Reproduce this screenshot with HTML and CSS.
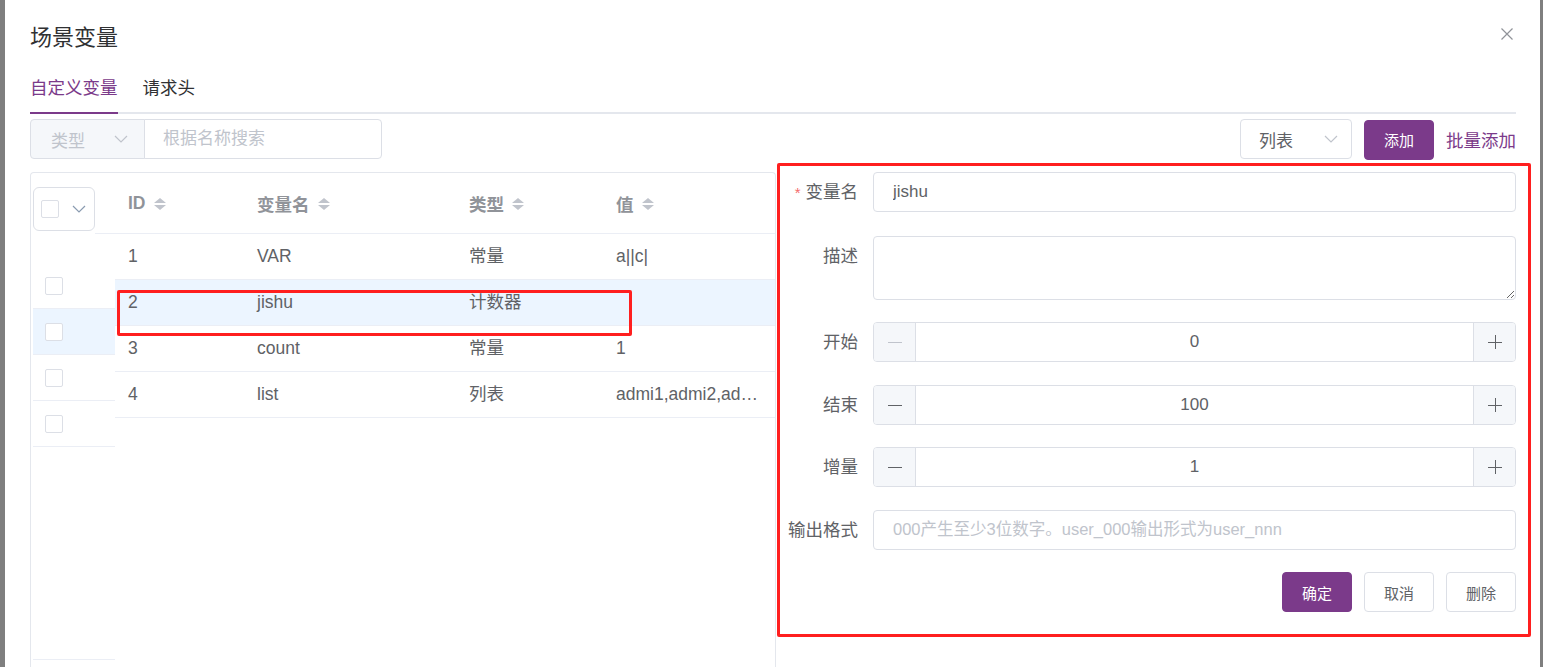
FILE: index.html
```html
<!DOCTYPE html>
<html lang="zh-CN">
<head>
    <meta charset="UTF-8">
    <meta name="viewport" content="width=device-width, initial-scale=1.0">
    <title>场景变量</title>
    <link rel="stylesheet" href="styles.css">
</head>
<body>
    <div class="dialog">
        <div class="dialog-header">
            <span class="dialog-title">场景变量</span>
            <button class="dialog-close" type="button">
                <svg width="12" height="12" viewBox="0 0 12 12"><path d="M0.5 0.5 L11.5 11.5 M11.5 0.5 L0.5 11.5" stroke="#909399" stroke-width="1.2" fill="none"/></svg>
            </button>
        </div>

        <div class="tabs">
            <div class="tab active">自定义变量</div>
            <div class="tab">请求头</div>
        </div>

        <div class="toolbar">
            <div class="search-group">
                <div class="select type-select">
                    <span>类型</span>
                    <svg class="chevron" width="14" height="8" viewBox="0 0 14 8"><polyline points="1,1 7,7 13,1" stroke="#c0c4cc" stroke-width="1.2" fill="none"/></svg>
                </div>
                <input class="search-input" type="text" placeholder="根据名称搜索">
            </div>
            <div class="toolbar-right">
                <div class="select view-select">
                    <span>列表</span>
                    <svg class="chevron" width="14" height="8" viewBox="0 0 14 8"><polyline points="1,1 7,7 13,1" stroke="#c0c4cc" stroke-width="1.2" fill="none"/></svg>
                </div>
                <button class="btn btn-primary" type="button">添加</button>
                <a class="link" href="#">批量添加</a>
            </div>
        </div>

        <div class="content">
            <div class="table-wrap">
                <div class="fixed-col">
                    <div class="fixed-head">
                        <div class="check-menu">
                            <span class="checkbox"></span>
                            <svg width="14" height="8" viewBox="0 0 14 8"><polyline points="1,1 7,7 13,1" stroke="#8a9bb0" stroke-width="1.2" fill="none"/></svg>
                        </div>
                    </div>
                    <div class="fixed-row"><span class="checkbox"></span></div>
                    <div class="fixed-row current"><span class="checkbox"></span></div>
                    <div class="fixed-row"><span class="checkbox"></span></div>
                    <div class="fixed-row"><span class="checkbox"></span></div>
                </div>

                <div class="main-table">
                    <div class="row head">
                        <div class="cell">ID <span class="caret"><i class="up"></i><i class="down"></i></span></div>
                        <div class="cell">变量名 <span class="caret"><i class="up"></i><i class="down"></i></span></div>
                        <div class="cell">类型 <span class="caret"><i class="up"></i><i class="down"></i></span></div>
                        <div class="cell">值 <span class="caret"><i class="up"></i><i class="down"></i></span></div>
                    </div>
                    <div class="row">
                        <div class="cell">1</div>
                        <div class="cell">VAR</div>
                        <div class="cell">常量</div>
                        <div class="cell">a||c|</div>
                    </div>
                    <div class="row current">
                        <div class="cell">2</div>
                        <div class="cell">jishu</div>
                        <div class="cell">计数器</div>
                        <div class="cell"></div>
                    </div>
                    <div class="row">
                        <div class="cell">3</div>
                        <div class="cell">count</div>
                        <div class="cell">常量</div>
                        <div class="cell">1</div>
                    </div>
                    <div class="row">
                        <div class="cell">4</div>
                        <div class="cell">list</div>
                        <div class="cell">列表</div>
                        <div class="cell" title="admi1,admi2,admi3">admi1,admi2,ad…</div>
                    </div>
                </div>
            </div>

            <form class="var-form">
                <div class="form-item">
                    <label class="form-label required">变量名</label>
                    <input class="input" type="text" value="jishu">
                </div>
                <div class="form-item">
                    <label class="form-label">描述</label>
                    <textarea class="textarea"></textarea>
                </div>
                <div class="form-item">
                    <label class="form-label">开始</label>
                    <div class="number-input">
                        <span class="num-btn minus disabled"><svg width="14" height="14" viewBox="0 0 14 14"><path d="M0 7.5 H14" stroke="currentColor" stroke-width="1"/></svg></span>
                        <input type="text" value="0">
                        <span class="num-btn plus"><svg width="14" height="14" viewBox="0 0 14 14"><path d="M0 7.5 H14 M7.5 0 V14" stroke="currentColor" stroke-width="1"/></svg></span>
                    </div>
                </div>
                <div class="form-item">
                    <label class="form-label">结束</label>
                    <div class="number-input">
                        <span class="num-btn minus"><svg width="14" height="14" viewBox="0 0 14 14"><path d="M0 7.5 H14" stroke="currentColor" stroke-width="1"/></svg></span>
                        <input type="text" value="100">
                        <span class="num-btn plus"><svg width="14" height="14" viewBox="0 0 14 14"><path d="M0 7.5 H14 M7.5 0 V14" stroke="currentColor" stroke-width="1"/></svg></span>
                    </div>
                </div>
                <div class="form-item">
                    <label class="form-label">增量</label>
                    <div class="number-input">
                        <span class="num-btn minus"><svg width="14" height="14" viewBox="0 0 14 14"><path d="M0 7.5 H14" stroke="currentColor" stroke-width="1"/></svg></span>
                        <input type="text" value="1">
                        <span class="num-btn plus"><svg width="14" height="14" viewBox="0 0 14 14"><path d="M0 7.5 H14 M7.5 0 V14" stroke="currentColor" stroke-width="1"/></svg></span>
                    </div>
                </div>
                <div class="form-item">
                    <label class="form-label">输出格式</label>
                    <input class="input format-input" type="text" placeholder="000产生至少3位数字。user_000输出形式为user_nnn">
                </div>
                <div class="form-actions">
                    <button class="btn btn-primary" type="button">确定</button>
                    <button class="btn" type="button">取消</button>
                    <button class="btn" type="button">删除</button>
                </div>
            </form>
        </div>
    </div>

    <!-- annotation boxes drawn over the screenshot -->
    <div class="mark mark-row"></div>
    <div class="mark mark-form"></div>
</body>
</html>
```

FILE: styles.css
```css
:root {
    --primary: #7b3a8a;
    --text: #606266;
    --title: #303133;
    --muted: #909399;
    --placeholder: #c0c4cc;
    --border: #dcdfe6;
    --line: #ebeef5;
    --fill: #f5f7fa;
    --current: #ecf5ff;
}

* {
    margin: 0;
    padding: 0;
    box-sizing: border-box;
    font-family: "Liberation Sans", "Noto Sans CJK SC", sans-serif;
}

body {
    position: relative;
    width: 1543px;
    height: 667px;
    overflow: hidden;
    background-color: #7f7f7f;
}

.dialog {
    margin-left: 5px;
    width: 1535px;
    height: 667px;
    padding: 0 24px 0 25px;
    background-color: #fff;
}

.dialog-header {
    display: flex;
    justify-content: space-between;
    align-items: center;
    padding-top: 23px;
    height: 52px;
}

.dialog-title {
    font-size: 22px;
    line-height: 30px;
    color: var(--title);
}

.dialog-close {
    border: none;
    background: none;
    width: 12px;
    height: 12px;
    margin-right: 3px;
    margin-top: -8px;
    display: flex;
}

.tabs {
    display: flex;
    gap: 25px;
    margin-top: 12px;
    height: 50px;
    border-bottom: 2px solid #e4e7ed;
}

.tab {
    font-size: 17.5px;
    line-height: 48px;
    color: var(--title);
}

.tab.active {
    color: var(--primary);
    border-bottom: 2px solid var(--primary);
    height: 50px;
}

.toolbar {
    display: flex;
    justify-content: space-between;
    margin-top: 5px;
    height: 40px;
}

.search-group {
    display: flex;
}

.select {
    display: flex;
    align-items: center;
    justify-content: space-between;
    height: 40px;
    border: 1px solid var(--border);
    border-radius: 4px;
    font-size: 17px;
    color: var(--text);
}

.type-select {
    width: 115px;
    padding: 0 16px 0 20px;
    background-color: var(--fill);
    color: var(--placeholder);
    border-radius: 4px 0 0 4px;
}

.search-input {
    width: 238px;
    height: 40px;
    margin-left: -1px;
    border: 1px solid var(--border);
    border-radius: 0 4px 4px 0;
    padding: 0 18px;
    font-size: 17px;
    outline: none;
}

.search-input::placeholder,
.input::placeholder {
    color: var(--placeholder);
}

.toolbar-right {
    display: flex;
    align-items: center;
}

.view-select {
    width: 112px;
    padding: 0 13px 0 18px;
}

.btn {
    width: 70px;
    height: 40px;
    border: 1px solid var(--border);
    border-radius: 4px;
    background-color: #fff;
    color: var(--text);
    font-size: 15px;
    cursor: pointer;
}

.btn-primary {
    background-color: var(--primary);
    border-color: var(--primary);
    color: #fff;
}

.toolbar-right .btn {
    margin-left: 12px;
    margin-top: 1px;
}

.link {
    margin-left: 12px;
    font-size: 17.5px;
    color: var(--primary);
    text-decoration: none;
}

.content {
    display: flex;
    margin-top: 13px;
}

/* table */
.table-wrap {
    display: flex;
    width: 746px;
    height: 500px;
    border: 1px solid #e4e7ed;
    border-bottom: none;
    border-radius: 4px 4px 0 0;
}

.fixed-col {
    width: 82px;
    margin-left: 2px;
    height: 487px;
    border-bottom: 1px solid var(--line);
}

.fixed-head {
    position: relative;
    height: 90px;
    padding-top: 14px;
}

.fixed-head::after {
    content: "";
    position: absolute;
    left: 62px;
    right: 0;
    top: 60px;
    height: 1px;
    background-color: var(--line);
}

.check-menu {
    display: flex;
    align-items: center;
    gap: 13px;
    width: 62px;
    height: 44px;
    padding-left: 7px;
    border: 1px solid var(--border);
    border-radius: 6px;
}

.checkbox {
    display: inline-block;
    width: 18px;
    height: 18px;
    border: 1px solid var(--border);
    border-radius: 2px;
    background-color: #fff;
}

.fixed-row {
    height: 46px;
    padding-left: 12px;
    display: flex;
    align-items: center;
    border-bottom: 1px solid var(--line);
}

.fixed-row.current,
.row.current {
    background-color: var(--current);
}

.main-table {
    flex: 1;
}

.row {
    display: grid;
    grid-template-columns: 129px 212px 147px 170px;
    height: 46px;
    border-bottom: 1px solid var(--line);
}

.row.head {
    height: 61px;
}

.cell {
    display: flex;
    align-items: center;
    padding: 0 13px;
    font-size: 17.5px;
    color: var(--text);
    white-space: nowrap;
}

.row:not(.head) .cell {
    display: block;
    line-height: 45px;
}

.row.head .cell {
    font-weight: bold;
    color: var(--muted);
    padding-top: 1px;
}

.caret {
    display: inline-flex;
    flex-direction: column;
    gap: 2px;
    margin-left: 8px;
}

.caret i {
    width: 0;
    height: 0;
    border-left: 6px solid transparent;
    border-right: 6px solid transparent;
}

.caret .up {
    border-bottom: 5px solid var(--placeholder);
}

.caret .down {
    border-top: 5px solid var(--placeholder);
}

/* form */
.var-form {
    flex: 1;
    margin-left: 1px;
}

.form-item {
    display: flex;
    margin-bottom: 22.5px;
}

.form-label {
    width: 96px;
    flex-shrink: 0;
    padding-right: 15px;
    text-align: right;
    font-size: 17.5px;
    line-height: 40px;
    color: var(--text);
}

.form-label.required::before {
    content: "*";
    color: #f56c6c;
    margin-right: 5px;
    font-size: 15px;
}

.input {
    flex: 1;
    height: 40px;
    padding: 0 19px;
    border: 1px solid var(--border);
    border-radius: 4px;
    font-size: 17px;
    color: var(--text);
    outline: none;
}

.format-input {
    font-size: 16.5px;
}

.textarea {
    flex: 1;
    height: 64px;
    padding: 6px 19px;
    border: 1px solid var(--border);
    border-radius: 4px;
    font-size: 17px;
    resize: vertical;
    outline: none;
}

.number-input {
    flex: 1;
    display: flex;
    height: 40px;
    border: 1px solid var(--border);
    border-radius: 4px;
    overflow: hidden;
}

.number-input input {
    flex: 1;
    min-width: 0;
    border: none;
    text-align: center;
    font-size: 17px;
    color: var(--text);
    outline: none;
}

.num-btn {
    width: 42px;
    display: flex;
    align-items: center;
    justify-content: center;
    background-color: var(--fill);
    color: var(--text);
}

.num-btn.minus {
    border-right: 1px solid var(--border);
}

.num-btn.plus {
    border-left: 1px solid var(--border);
}

.num-btn.disabled {
    color: var(--placeholder);
}

.form-actions {
    display: flex;
    justify-content: flex-end;
    gap: 12px;
}

/* red annotation boxes */
.mark {
    position: absolute;
    border: 3px solid #ff1f1f;
    border-radius: 2px;
}

.mark-row {
    left: 117px;
    top: 290px;
    width: 515px;
    height: 46px;
}

.mark-form {
    left: 777px;
    top: 163px;
    width: 754px;
    height: 474px;
}
```
